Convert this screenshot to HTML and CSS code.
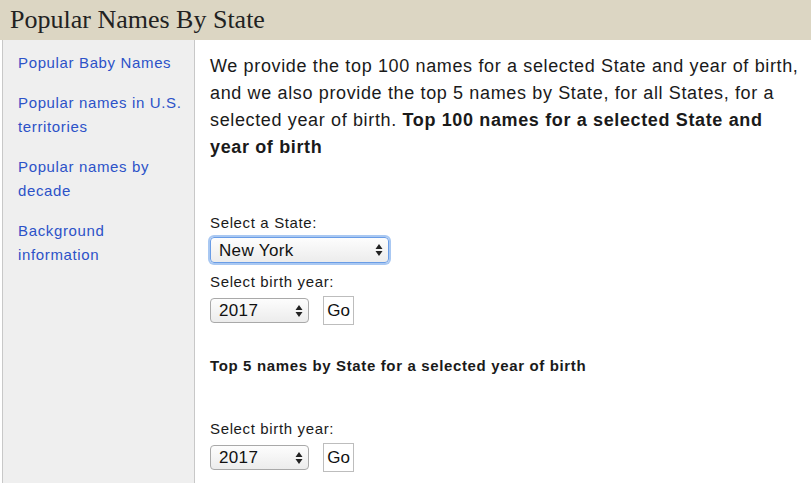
FILE: index.html
```html
<!DOCTYPE html>
<html lang="en">
<head>
    <meta charset="UTF-8">
    <title>Popular Names By State</title>
    <link rel="stylesheet" href="styles.css">
</head>
<body>
    <header class="page-title">
        <h1>Popular Names By State</h1>
    </header>
    <div class="layout">
        <nav class="sidebar">
            <a href="#">Popular Baby Names</a>
            <a href="#">Popular names in U.S. territories</a>
            <a href="#">Popular names by decade</a>
            <a href="#">Background information</a>
        </nav>
        <main class="content">
            <p class="intro">We provide the top 100 names for a selected State and year of birth, and we also provide the top 5 names by State, for all States, for a selected year of birth. <b>Top 100 names for a selected State and year of birth</b></p>

            <form class="pick first">
                <label for="state">Select a State:</label>
                <div class="select-wrap wide focused">
                    <select id="state">
                        <option>New York</option>
                    </select>
                    <svg class="arrows" width="8" height="14" viewBox="0 0 8 14"><path d="M4 1 L7.5 6 H0.5 Z M4 13 L7.5 8 H0.5 Z" fill="#222"/></svg>
                </div>
                <label for="year1">Select birth year:</label>
                <div class="row">
                    <div class="select-wrap">
                        <select id="year1">
                            <option>2017</option>
                        </select>
                        <svg class="arrows" width="8" height="14" viewBox="0 0 8 14"><path d="M4 1 L7.5 6 H0.5 Z M4 13 L7.5 8 H0.5 Z" fill="#222"/></svg>
                    </div>
                    <button type="button" class="go">Go</button>
                </div>
            </form>

            <h3 class="sub">Top 5 names by State for a selected year of birth</h3>

            <form class="pick">
                <label for="year2">Select birth year:</label>
                <div class="row">
                    <div class="select-wrap">
                        <select id="year2">
                            <option>2017</option>
                        </select>
                        <svg class="arrows" width="8" height="14" viewBox="0 0 8 14"><path d="M4 1 L7.5 6 H0.5 Z M4 13 L7.5 8 H0.5 Z" fill="#222"/></svg>
                    </div>
                    <button type="button" class="go">Go</button>
                </div>
            </form>
        </main>
    </div>
</body>
</html>
```

FILE: styles.css
```css
body {
    margin: 0;
    padding: 0;
    font-family: 'Liberation Sans', Arial, sans-serif;
    letter-spacing: 0.04em;
    color: #1a1a1a;
    background: #fff;
}

.page-title {
    background-color: #dcd6c3;
    height: 40px;
    padding: 0 10px;
    display: flex;
    align-items: center;
}

.page-title h1 {
    margin: 0;
    font-family: 'Liberation Serif', 'Times New Roman', serif;
    font-weight: normal;
    font-size: 26px;
    letter-spacing: 0;
    color: #222;
}

.layout {
    display: flex;
    min-height: 443px;
}

.sidebar {
    width: 168px;
    margin-left: 2px;
    padding: 11px 8px 0 15px;
    background-color: #efefef;
    border-left: 1px solid #c8c8c8;
    border-right: 1px solid #c8c8c8;
    display: flex;
    flex-direction: column;
    gap: 16px;
}

.sidebar a {
    color: #2c52c8;
    text-decoration: none;
    font-size: 15px;
    line-height: 24px;
}

.content {
    padding: 13px 8px 0 15px;
    flex: 1;
}

.intro {
    margin: 0;
    font-size: 18px;
    line-height: 27px;
}

.pick {
    margin-top: 44px;
    display: flex;
    flex-direction: column;
    align-items: flex-start;
}

.pick.first {
    margin-top: 53px;
}

.pick label {
    font-size: 15px;
    line-height: 18px;
    margin-bottom: 5px;
}

.row {
    display: flex;
    align-items: center;
    gap: 14px;
}

.select-wrap {
    position: relative;
    width: 99px;
    height: 25px;
    margin-bottom: 10px;
}

.select-wrap.wide {
    width: 179px;
    height: 26px;
}

.select-wrap select {
    -webkit-appearance: none;
    appearance: none;
    width: 100%;
    height: 100%;
    box-sizing: border-box;
    border: 1px solid #a9a9a9;
    border-radius: 4px;
    background: linear-gradient(#fdfdfd, #ececec);
    font-family: 'Liberation Sans', Arial, sans-serif;
    font-size: 17px;
    letter-spacing: 0.02em;
    color: #111;
    padding: 0 0 0 8px;
    outline: none;
}

.select-wrap.focused select {
    border-color: #6a9de6;
    box-shadow: 0 0 0 2px #a9c8f2;
}

.arrows {
    position: absolute;
    right: 6px;
    top: 50%;
    margin-top: -7px;
    pointer-events: none;
}

.go {
    width: 31px;
    height: 29px;
    margin-bottom: 10px;
    background: #fff;
    border: 1px solid #bdbdbd;
    border-radius: 0;
    font-family: 'Liberation Sans', Arial, sans-serif;
    font-size: 17px;
    letter-spacing: 0;
    padding: 0;
    color: #111;
}

.sub {
    margin: 21px 0 0;
    font-size: 15px;
    line-height: 20px;
}
```
